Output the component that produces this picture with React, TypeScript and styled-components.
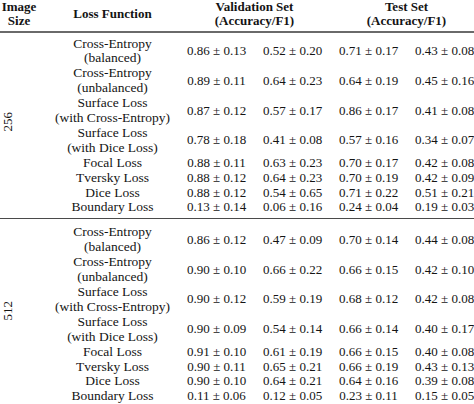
import styled, { createGlobalStyle } from "styled-components";

const GlobalStyle = createGlobalStyle`
  html, body {
    margin: 0;
    padding: 0;
    background: #ffffff;
  }
  body {
    font-family: "Liberation Serif", "Times New Roman", serif;
    color: #141414;
  }
`;

const StyledTable = styled.div`
  width: 474px;
  height: 404px;
  overflow: hidden;
  background: #fff;
`;

const StyledGrid = styled.div`
  display: grid;
  grid-template-columns: 38px 115px 59px 59px 59px 59px;
  column-gap: 17px;
`;

const StyledHeader = styled(StyledGrid)`
  grid-template-rows: 28px;
  padding-bottom: 3px;
  border-bottom: 2px solid #6a6a6a;
`;

const StyledHeadCell = styled.div<{ $span?: number }>`
  grid-column: span ${(p) => p.$span ?? 1};
  display: flex;
  flex-direction: column;
  align-items: center;
  justify-content: center;
  text-align: center;
  font-weight: bold;
  font-size: 13px;
  line-height: 14px;
  white-space: nowrap;
`;

const StyledGroup = styled(StyledGrid)<{ $first?: boolean }>`
  padding-top: ${(p) => (p.$first ? "3.5px" : "6.5px")};
  padding-bottom: 2.5px;
  border-top: ${(p) => (p.$first ? "none" : "1.5px solid #4a4a4a")};
`;

const StyledSizeLabel = styled.div<{ $rows: number }>`
  grid-column: 1;
  grid-row: 1 / span ${(p) => p.$rows};
  align-self: center;
  justify-self: start;
  margin-bottom: 8px;
  margin-left: 1px;
  padding: 0 1px;
  writing-mode: vertical-rl;
  transform: rotate(180deg);
  font-size: 13px;
  line-height: 12px;
`;

const StyledLossCell = styled.div`
  grid-column: 2;
  text-align: center;
  font-size: 13.5px;
  line-height: 14.9px;
  white-space: nowrap;
`;

const StyledValue = styled.div`
  align-self: center;
  text-align: center;
  font-size: 13px;
  line-height: 14.9px;
  white-space: nowrap;
`;

type Row = { loss: string[]; values: string[] };

const losses: string[][] = [
  ["Cross-Entropy", "(balanced)"],
  ["Cross-Entropy", "(unbalanced)"],
  ["Surface Loss", "(with Cross-Entropy)"],
  ["Surface Loss", "(with Dice Loss)"],
  ["Focal Loss"],
  ["Tversky Loss"],
  ["Dice Loss"],
  ["Boundary Loss"],
];

const values256 = [
  ["0.86 ± 0.13", "0.52 ± 0.20", "0.71 ± 0.17", "0.43 ± 0.08"],
  ["0.89 ± 0.11", "0.64 ± 0.23", "0.64 ± 0.19", "0.45 ± 0.16"],
  ["0.87 ± 0.12", "0.57 ± 0.17", "0.86 ± 0.17", "0.41 ± 0.08"],
  ["0.78 ± 0.18", "0.41 ± 0.08", "0.57 ± 0.16", "0.34 ± 0.07"],
  ["0.88 ± 0.11", "0.63 ± 0.23", "0.70 ± 0.17", "0.42 ± 0.08"],
  ["0.88 ± 0.12", "0.64 ± 0.23", "0.70 ± 0.19", "0.42 ± 0.09"],
  ["0.88 ± 0.12", "0.54 ± 0.65", "0.71 ± 0.22", "0.51 ± 0.21"],
  ["0.13 ± 0.14", "0.06 ± 0.16", "0.24 ± 0.04", "0.19 ± 0.03"],
];

const values512 = [
  ["0.86 ± 0.12", "0.47 ± 0.09", "0.70 ± 0.14", "0.44 ± 0.08"],
  ["0.90 ± 0.10", "0.66 ± 0.22", "0.66 ± 0.15", "0.42 ± 0.10"],
  ["0.90 ± 0.12", "0.59 ± 0.19", "0.68 ± 0.12", "0.42 ± 0.08"],
  ["0.90 ± 0.09", "0.54 ± 0.14", "0.66 ± 0.14", "0.40 ± 0.17"],
  ["0.91 ± 0.10", "0.61 ± 0.19", "0.66 ± 0.15", "0.40 ± 0.08"],
  ["0.90 ± 0.11", "0.65 ± 0.21", "0.66 ± 0.19", "0.43 ± 0.13"],
  ["0.90 ± 0.10", "0.64 ± 0.21", "0.64 ± 0.16", "0.39 ± 0.08"],
  ["0.11 ± 0.06", "0.12 ± 0.05", "0.23 ± 0.11", "0.15 ± 0.05"],
];

const groups: { size: string; rows: Row[] }[] = [
  { size: "256", rows: losses.map((loss, i) => ({ loss, values: values256[i] })) },
  { size: "512", rows: losses.map((loss, i) => ({ loss, values: values512[i] })) },
];

const App = () => {
  return (
    <StyledTable>
      <GlobalStyle />
      <StyledHeader>
        <StyledHeadCell>
          <span>Image</span>
          <span>Size</span>
        </StyledHeadCell>
        <StyledHeadCell>Loss Function</StyledHeadCell>
        <StyledHeadCell $span={2}>
          <span>Validation Set</span>
          <span>(Accuracy/F1)</span>
        </StyledHeadCell>
        <StyledHeadCell $span={2}>
          <span>Test Set</span>
          <span>(Accuracy/F1)</span>
        </StyledHeadCell>
      </StyledHeader>
      {groups.map((group, gi) => (
        <StyledGroup key={group.size} $first={gi === 0}>
          <StyledSizeLabel $rows={group.rows.length}>{group.size}</StyledSizeLabel>
          {group.rows.map((row, ri) => [
            <StyledLossCell key={`l${ri}`}>
              {row.loss.map((line) => (
                <div key={line}>{line}</div>
              ))}
            </StyledLossCell>,
            ...row.values.map((v, vi) => (
              <StyledValue key={`v${ri}-${vi}`}>{v}</StyledValue>
            )),
          ])}
        </StyledGroup>
      ))}
    </StyledTable>
  );
};

export default App;
